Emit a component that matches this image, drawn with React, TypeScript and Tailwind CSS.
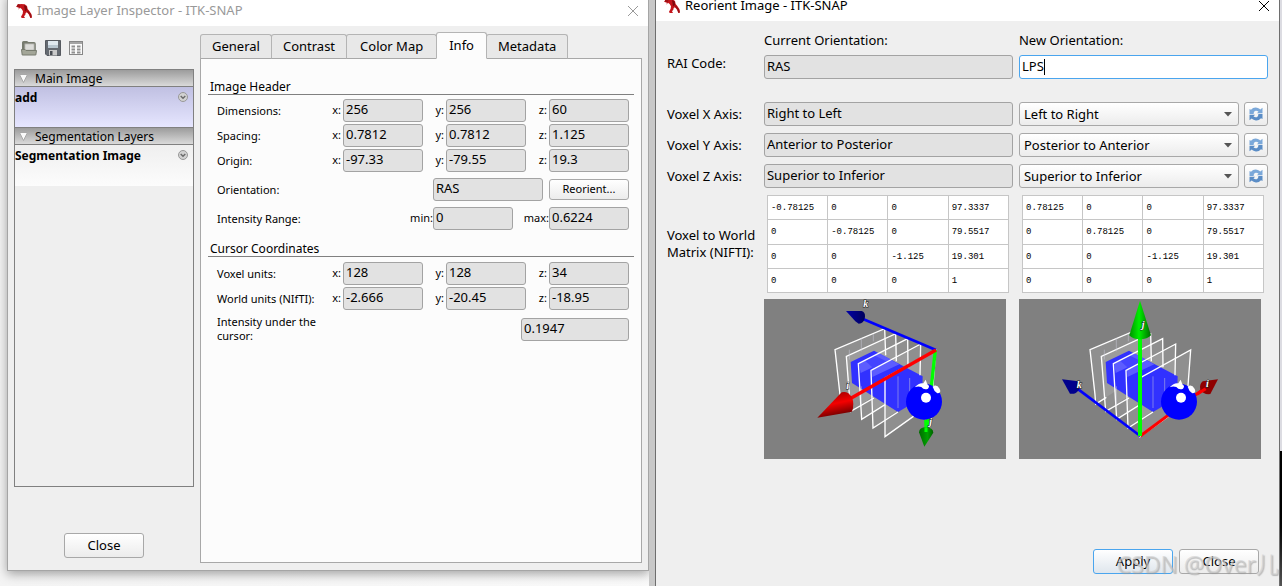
import type { ReactNode } from "react";
import clsx from "clsx";

const FIELD =
  "rounded-[3px] border border-[#a3a3a3] bg-[#e2e2e2] px-0.5 pb-[3px] text-[13px] text-black outline-none";
const BUTTON =
  "rounded-[3px] border border-[#a8a8a8] bg-linear-to-b from-white to-[#ececec] text-black";

const TABS = ["General", "Contrast", "Color Map", "Info", "Metadata"];

const DIRECTIONS = [
  "Left to Right",
  "Right to Left",
  "Posterior to Anterior",
  "Anterior to Posterior",
  "Superior to Inferior",
  "Inferior to Superior",
];

const AXES = [
  { axis: "X", current: "Right to Left", next: "Left to Right" },
  { axis: "Y", current: "Anterior to Posterior", next: "Posterior to Anterior" },
  { axis: "Z", current: "Superior to Inferior", next: "Superior to Inferior" },
];

const CURRENT_MATRIX = [
  ["-0.78125", "0", "0", "97.3337"],
  ["0", "-0.78125", "0", "79.5517"],
  ["0", "0", "-1.125", "19.301"],
  ["0", "0", "0", "1"],
];

const NEW_MATRIX = [
  ["0.78125", "0", "0", "97.3337"],
  ["0", "0.78125", "0", "79.5517"],
  ["0", "0", "-1.125", "19.301"],
  ["0", "0", "0", "1"],
];

function SnapIcon() {
  return (
    <svg width="16" height="16" viewBox="0 0 48 48" aria-hidden="true">
      <path
        d="M0 11 L5 5 L15 3 L26 4 L33 9 L35 18 L40 24 L46 33 L48 44 L43 45 L39 35 L33 28 L29 30 L28 35 L24 40 L27 45 L17 45 L15 41 L20 32 L21 25 L17 18 L12 14 L7 20 L9 14 Z"
        fill="#c4161c"
      />
      <circle cx="8" cy="8" r="5" fill="#a01015" />
      <path d="M24 6 L32 11 L33 21 L27 25 Z" fill="#7d0a0e" />
      <path d="M35 21 L46 35 L47 43 L43 44 L40 34 L33 27 Z" fill="#9a1014" />
    </svg>
  );
}

function CloseIcon() {
  return (
    <svg width="12" height="12" viewBox="0 0 12 12" aria-hidden="true">
      <path d="M1 1 L11 11 M11 1 L1 11" stroke="currentColor" fill="none" />
    </svg>
  );
}

function FolderIcon() {
  return (
    <svg width="16" height="16" viewBox="0 0 16 16" aria-hidden="true">
      <path d="M1 14 V2.500 Q1 1 2.500 1 H6 L7.500 2 H13 Q14.800 2 14.800 4 V14 Z" fill="#777b6e" />
      <rect x="4" y="4" width="9" height="6" fill="#e9e9e6" stroke="#b5b5b0" />
      <path d="M5 6 H12 M5 8 H12" stroke="#cfcfcb" />
      <path d="M0.500 9.500 H4 L5 10.500 H15.500 L14.800 15 H1.200 Z" fill="#a3a698" stroke="#777b6e" />
    </svg>
  );
}

function SaveIcon() {
  return (
    <svg width="16" height="16" viewBox="0 0 16 16" aria-hidden="true">
      <path d="M0.500 0.500 H15.500 V15.500 H2 L0.500 14 Z" fill="#656a71" stroke="#565a60" />
      <rect x="3" y="1" width="10" height="7" fill="#dfe8ef" />
      <rect x="3" y="5" width="10" height="3" fill="#b8c6d0" />
      <rect x="4" y="10" width="8" height="5.500" fill="#c9c9c9" />
      <rect x="5" y="11" width="2.500" height="4" fill="#484c52" />
    </svg>
  );
}

function TableIcon() {
  return (
    <svg width="14" height="14" viewBox="0 0 14 14" aria-hidden="true">
      <rect x="0.500" y="0.500" width="13" height="13" fill="#fbfbfb" stroke="#878787" />
      <path d="M1 2 H13" stroke="#a5a5a5" strokeWidth="2" />
      <path
        d="M2.500 5.500 H6 M8 5.500 H11.500 M2.500 8.500 H6 M8 8.500 H11.500 M2.500 11.500 H6 M8 11.500 H11.500"
        stroke="#909090"
        strokeWidth="2"
      />
    </svg>
  );
}

function MenuBadge() {
  return (
    <svg width="10" height="10" viewBox="0 0 10 10" aria-hidden="true">
      <circle cx="5" cy="5" r="4.500" fill="#d2d2d2" stroke="#989898" />
      <path d="M2.700 4 L5 6.300 L7.300 4" stroke="#6a6a6a" strokeWidth="1.400" fill="none" />
    </svg>
  );
}

function SwapIcon() {
  return (
    <svg width="14" height="14" viewBox="0 0 14 14" aria-hidden="true">
      <path d="M0.500 7 V2 L2 2.800 Q4.500 0 8 0.800 Q10.300 1.300 11.300 2.600 L13.500 0.800 V6.300 H8 L9.500 4.500 Q7.500 3.200 5.800 4 Q4.600 4.800 4.600 7 Z" fill="#7ba8d9" />
      <path d="M13.500 7 V12 L12 11.200 Q9.500 14 6 13.200 Q3.700 12.700 2.700 11.400 L0.500 13.200 V7.700 H6 L4.500 9.500 Q6.500 10.800 8.200 10 Q9.400 9.200 9.400 7 Z" fill="#5b8dc6" />
    </svg>
  );
}

function TitleBar({ title, muted }: { title: string; muted?: boolean }) {
  return (
    <header
      className={clsx(
        "flex h-[31px] shrink-0 items-center bg-white pr-[9px] pl-2",
        muted ? "text-[#999]" : "text-black",
      )}
    >
      <SnapIcon />
      <h1 className="ml-[5px] flex-1 text-[13px]">{title}</h1>
      <button type="button" aria-label="Close window">
        <CloseIcon />
      </button>
    </header>
  );
}

function LayerGroup({ title, layer, selected }: { title: string; layer: string; selected?: boolean }) {
  return (
    <>
      <h2 className="flex h-[17px] items-center gap-[7px] border-b border-[#808080] bg-linear-to-b from-[#9c9c9c] to-[#dadada] pt-px pl-1 text-[12px]">
        <svg width="9" height="9" viewBox="0 0 9 9" aria-hidden="true">
          <path d="M0.500 0.500 H8.500 L4.500 8.500 Z" fill="#fafafa" stroke="#a8a8a8" />
        </svg>
        {title}
      </h2>
      <div
        className={clsx(
          "flex h-[41px] items-start justify-between bg-linear-to-b pr-[5px]",
          selected
            ? "border-b border-[#808080] from-[#c0c0e2] to-[#e6e6ff]"
            : "from-[#efefef] to-[#fcfcfc]",
        )}
      >
        <span className="text-[12px] leading-[22px] font-bold">{layer}</span>
        <button type="button" className="mt-[5px]" aria-label={layer + " menu"}>
          <MenuBadge />
        </button>
      </div>
    </>
  );
}

function SectionTitle({ children }: { children: ReactNode }) {
  return (
    <h2 className="border-b border-[#808080] pl-0.5 text-[12px] leading-[15px]">{children}</h2>
  );
}

function Row({ label, children }: { label: string; children: ReactNode }) {
  return (
    <div className="flex items-center justify-between pr-[5px] pl-[9px] text-[11px]">
      <span className="w-[120px] leading-[14px]">{label}</span>
      <div className="flex">{children}</div>
    </div>
  );
}

function Field({ name, value }: { name: string; value: string }) {
  return (
    <label className="flex items-center">
      <span className="w-[23px] pr-0.5 text-right">{name}</span>
      <input readOnly defaultValue={value} className={clsx(FIELD, "h-[23px] w-20")} />
    </label>
  );
}

function Triple({ label, values }: { label: string; values: string[] }) {
  return (
    <Row label={label}>
      <Field name="x:" value={values[0]} />
      <Field name="y:" value={values[1]} />
      <Field name="z:" value={values[2]} />
    </Row>
  );
}

function InfoPanel() {
  return (
    <div className="flex-1 border border-[#a8a8a8] bg-[#fcfcfc] px-[7px] pt-5">
      <SectionTitle>Image Header</SectionTitle>
      <div className="mt-1 flex flex-col gap-0.5">
        <Triple label="Dimensions:" values={["256", "256", "60"]} />
        <Triple label="Spacing:" values={["0.7812", "0.7812", "1.125"]} />
        <Triple label="Origin:" values={["-97.33", "-79.55", "19.3"]} />
      </div>
      <div className="mt-1.5 flex flex-col gap-1.5">
        <Row label="Orientation:">
          <input
            readOnly
            aria-label="Orientation"
            defaultValue="RAS"
            className={clsx(FIELD, "mr-1.5 h-[23px] w-[110px]")}
          />
          <button type="button" className={clsx(BUTTON, "my-px w-20")}>
            Reorient...
          </button>
        </Row>
        <Row label="Intensity Range:">
          <label className="flex items-center">
            min:
            <input readOnly defaultValue="0" className={clsx(FIELD, "h-[23px] w-20")} />
          </label>
          <label className="flex items-center">
            <span className="w-9 text-right">max:</span>
            <input readOnly defaultValue="0.6224" className={clsx(FIELD, "h-[23px] w-20")} />
          </label>
        </Row>
      </div>
      <div className="mt-[11px]">
        <SectionTitle>Cursor Coordinates</SectionTitle>
      </div>
      <div className="mt-[5px] flex flex-col gap-0.5">
        <Triple label="Voxel units:" values={["128", "128", "34"]} />
        <Triple label="World units (NIfTI):" values={["-2.666", "-20.45", "-18.95"]} />
      </div>
      <div className="mt-[5px]">
        <Row label="Intensity under the cursor:">
          <input
            readOnly
            aria-label="Intensity under the cursor"
            defaultValue="0.1947"
            className={clsx(FIELD, "h-[23px] w-[108px]")}
          />
        </Row>
      </div>
    </div>
  );
}

function LayerInspector() {
  return (
    <section className="-mt-1.5 mb-[15px] flex min-w-0 flex-[642] flex-col border border-[#a5a5a5] bg-[#efefef] shadow-[0_3px_10px_rgba(0,0,0,0.35)]">
      <TitleBar title="Image Layer Inspector - ITK-SNAP" muted />
      <div className="grid flex-1 grid-cols-[180px_1fr] gap-1.5 px-1.5">
        <aside className="flex flex-col pb-3">
          <div className="flex h-[43px] items-center gap-2 pl-[7px]">
            <button type="button" aria-label="Open layer">
              <FolderIcon />
            </button>
            <button type="button" aria-label="Save layer">
              <SaveIcon />
            </button>
            <button type="button" aria-label="Layer table">
              <TableIcon />
            </button>
          </div>
          <div className="flex-1 border border-[#808080]">
            <LayerGroup title="Main Image" layer="add" selected />
            <LayerGroup title="Segmentation Layers" layer="Segmentation Image" />
          </div>
          <button type="button" className={clsx(BUTTON, "mt-[46px] h-[25px] w-20 self-center text-[13px]")}>
            Close
          </button>
        </aside>
        <div className="flex min-w-0 flex-col pt-1.5 pb-[7px]">
          <div role="tablist" className="relative -mb-px flex h-[27px] items-end">
            {TABS.map((tab) => (
              <button
                key={tab}
                type="button"
                role="tab"
                aria-selected={tab === "Info"}
                className={clsx(
                  "-mr-px rounded-t-[3px] border border-[#b4b4b4] text-[13px]",
                  tab === "Info"
                    ? "z-10 h-[27px] border-b-[#fcfcfc] bg-[#fcfcfc] px-3"
                    : "h-[25px] border-b-[#a8a8a8] bg-[#e8e8e8] px-[11px] pt-px",
                  tab === "Color Map" && "px-[13px]",
                )}
              >
                {tab}
              </button>
            ))}
          </div>
          <InfoPanel />
        </div>
      </div>
    </section>
  );
}

function Matrix({ rows, label }: { rows: string[][]; label: string }) {
  return (
    <table
      aria-label={label}
      className="ml-[3px] h-[98px] w-[242px] table-fixed border-collapse border border-[#b9b9b9] bg-white font-['Liberation_Mono',monospace] text-[9px]"
    >
      <tbody>
        {rows.map((row, r) => (
          <tr key={r}>
            {row.map((cell, c) => (
              <td key={c} className="border border-[#c6c6c6] px-[3px] pt-0.5 leading-none">
                {cell}
              </td>
            ))}
          </tr>
        ))}
      </tbody>
    </table>
  );
}

// The slices and the torso are the same in both scenes, only the axes move.
function Volume() {
  return (
    <>
      <g fill="#ffffff" fillOpacity="0.12">
        <path d="M213 155 L362 92 L370 227 L230 318 Z" />
        <path d="M247 175 L395 107 L402 245 L260 340 Z" />
        <path d="M283 197 L431 122 L434 265 L293 364 Z" />
        <path d="M321 217 L470 138 L466 290 L327 390 Z" />
        <path d="M363 240 L515 156 L503 316 L363 416 Z" />
      </g>
      <path d="M260 192 L330 158 L476 235 L474 300 L402 342 L264 255 Z" fill="#3131ff" />
      <path d="M285 196 L345 166 L378 183 L290 225 Z M324 212 L376 184 L406 199 L325 237 Z" fill="#5d5dff" />
      <path d="M300 185 L330 172 L372 192 L330 212 Z" fill="#4444ff" />
      <g stroke="#ffffff" strokeWidth="4" fill="none">
        <path d="M365 172 L362 92 L213 155 L228 290 L230 318 L262 298" />
        <path d="M397 190 L395 107 L247 175 L260 340 L330 300" />
        <path d="M432 208 L431 122 L283 197 L293 364 L363 320" />
        <path d="M468 232 L470 138 L321 217 L327 390 L402 342" />
        <path d="M503 316 L515 156 L363 240 L363 416 L503 316" />
      </g>
      <path
        d="M256 155 V185 M292 120 V160 M328 108 V130 M402 235 V330 M437 240 V300 M292 265 V320"
        stroke="#c8c8d8"
        strokeWidth="1.500"
      />
    </>
  );
}

function Head() {
  return (
    <g>
      <circle cx="480" cy="311" r="54" fill="#0000ff" />
      <path d="M452 268 Q466 253 478 256 L485 245 L490 259 Q499 264 492 272 Q480 277 472 267 Q462 264 452 268 Z" fill="#fff" />
      <path d="M506 266 Q518 257 527 273 Q533 285 520 286 Q510 280 506 266 Z" fill="#fff" />
      <circle cx="486" cy="299" r="15" fill="#fff" />
    </g>
  );
}

function AxisLabel({ x, y, children }: { x: number; y: number; children: string }) {
  return (
    <text
      x={x}
      y={y}
      fontSize="30"
      fill="#fff"
      stroke="#222"
      strokeWidth="3"
      paintOrder="stroke"
      className="font-['Liberation_Serif',serif] font-bold italic"
    >
      {children}
    </text>
  );
}

function CurrentScene() {
  return (
    <svg className="h-40 w-[242px] bg-[#808080]" viewBox="0 3 726 480" role="img" aria-label="Current orientation">
      <defs>
        <linearGradient id="redCone" x1="0" y1="0" x2="0.3" y2="1">
          <stop offset="0.2" stopColor="#b00000" />
          <stop offset="0.55" stopColor="#f40000" />
          <stop offset="1" stopColor="#700000" />
        </linearGradient>
        <linearGradient id="darkBlueCone">
          <stop offset="0" stopColor="#0000a8" />
          <stop offset="1" stopColor="#00005c" />
        </linearGradient>
        <linearGradient id="darkGreenCone">
          <stop offset="0" stopColor="#006c00" />
          <stop offset="0.6" stopColor="#00a000" />
          <stop offset="1" stopColor="#006000" />
        </linearGradient>
      </defs>
      <Volume />
      <path d="M514 156 L487 405" stroke="#00ff00" strokeWidth="10" />
      <Head />
      <path d="M290 60 L516 156" stroke="#0000ff" strokeWidth="8" />
      <path d="M516 156 L262 300" stroke="#ff0000" strokeWidth="10" />
      <path d="M246 39 L293 39 Q304 42 303 57 Q300 77 284 77 L274 70 Z" fill="url(#darkBlueCone)" />
      <path d="M160 359 L233 283 Q250 277 264 298 Q272 320 264 341 Z" fill="url(#redCone)" />
      <path d="M485 366 L486 404" stroke="#00ff00" strokeWidth="9" />
      <path d="M481 446 L465 403 Q466 388 486 388 Q507 389 508 404 Z" fill="url(#darkGreenCone)" />
      <path d="M486 388 V402" stroke="#00ff00" strokeWidth="9" />
      <AxisLabel x={298} y={26}>k</AxisLabel>
      <AxisLabel x={247} y={272}>i</AxisLabel>
      <AxisLabel x={496} y={382}>j</AxisLabel>
    </svg>
  );
}

function NewScene() {
  return (
    <svg className="h-40 w-[242px] bg-[#808080]" viewBox="0 3 726 480" role="img" aria-label="New orientation">
      <defs>
        <linearGradient id="greenCone">
          <stop offset="0" stopColor="#009000" />
          <stop offset="0.45" stopColor="#00ee00" />
          <stop offset="1" stopColor="#006a00" />
        </linearGradient>
      </defs>
      <Volume />
      <path d="M364 414 L560 268" stroke="#ff0000" strokeWidth="9" />
      <path d="M364 414 L170 268" stroke="#0000ff" strokeWidth="8" />
      <Head />
      <path d="M597 244 L551 250 Q540 260 544 276 Q555 291 574 288 Z" fill="#8f0000" />
      <path d="M534 289 L560 272" stroke="#ff0000" strokeWidth="9" />
      <path d="M129 244 L178 250 Q188 262 180 275 Q170 290 153 287 Z" fill="#00008c" />
      <path d="M363 414 V110" stroke="#00ff00" strokeWidth="12" />
      <path d="M363 8 L396 112 Q385 124 363 124 Q341 124 331 112 Z" fill="url(#greenCone)" />
      <AxisLabel x={173} y={270}>k</AxisLabel>
      <AxisLabel x={368} y={90}>j</AxisLabel>
      <AxisLabel x={561} y={266}>i</AxisLabel>
    </svg>
  );
}

function ReorientImage() {
  return (
    <section className="relative -mt-2.5 flex min-w-0 flex-[625] flex-col border-x border-[#6e6e6e] bg-[#efefef]">
      <TitleBar title="Reorient Image - ITK-SNAP" />
      <div className="grid grid-cols-[91px_1fr_1fr] gap-x-1.5 px-[11px] pt-[9px] text-[13px]">
        <span />
        <span className="leading-5">Current Orientation:</span>
        <label htmlFor="newCode" className="leading-5">
          New Orientation:
        </label>

        <label htmlFor="currentCode" className="mt-[3px] leading-5">
          RAI Code:
        </label>
        <input
          id="currentCode"
          readOnly
          defaultValue="RAS"
          className={clsx(FIELD, "mt-[5px] h-6 w-full")}
        />
        <div className="mt-[5px] flex h-6 items-center rounded-[3px] border border-[#4aa5ee] bg-white pl-0.5">
          <input
            id="newCode"
            defaultValue="LPS"
            size={3}
            className="field-sizing-content bg-transparent text-[13px] outline-none"
          />
          <span className="h-4 w-px bg-black" />
        </div>

        <div className="col-span-3 mt-[23px] flex flex-col gap-[7px]">
          {AXES.map(({ axis, current, next }) => (
            <div key={axis} className="grid grid-cols-[91px_1fr_1fr] items-center gap-x-1.5">
              <label htmlFor={"axis" + axis} className="pt-0.5">
                {"Voxel " + axis + " Axis:"}
              </label>
              <input
                readOnly
                aria-label={"Current voxel " + axis + " axis"}
                defaultValue={current}
                className={clsx(FIELD, "h-6 w-full")}
              />
              <div className="flex gap-[5px]">
                <div className="relative flex-1">
                  <select
                    id={"axis" + axis}
                    defaultValue={next}
                    className={clsx(BUTTON, "h-6 w-full appearance-none pt-px pl-1 text-[13px]")}
                  >
                    {DIRECTIONS.map((direction) => (
                      <option key={direction}>{direction}</option>
                    ))}
                  </select>
                  <svg
                    className="pointer-events-none absolute top-2.5 right-[7px]"
                    width="8"
                    height="5"
                    viewBox="0 0 8 5"
                    aria-hidden="true"
                  >
                    <path d="M0 0 H8 L4 4.500 Z" fill="#555" />
                  </svg>
                </div>
                <button
                  type="button"
                  aria-label={"Flip " + axis + " axis"}
                  className={clsx(BUTTON, "flex h-6 w-6 items-center justify-center")}
                >
                  <SwapIcon />
                </button>
              </div>
            </div>
          ))}
        </div>

        <span className="self-center pt-1.5 leading-[17px]">
          Voxel to World Matrix (NIFTI):
        </span>
        <div className="mt-[7px]">
          <Matrix rows={CURRENT_MATRIX} label="Current voxel to world matrix" />
        </div>
        <div className="mt-[7px]">
          <Matrix rows={NEW_MATRIX} label="New voxel to world matrix" />
        </div>

        <span />
        <div className="mt-1.5">
          <CurrentScene />
        </div>
        <div className="mt-1.5">
          <NewScene />
        </div>
      </div>
      <footer className="mt-auto flex justify-end gap-1.5 pr-5 pb-3 text-[13px]">
        <button
          type="button"
          className="h-[25px] w-20 rounded-[3px] border border-[#4aa5ee] bg-linear-to-b from-white to-[#dfe6ed]"
        >
          Apply
        </button>
        <button type="button" className={clsx(BUTTON, "h-[25px] w-20")}>
          Close
        </button>
      </footer>
      <span className="pointer-events-none absolute right-0 bottom-1.5 font-['Open_Sans','Noto_Sans_CJK_SC',sans-serif] text-[23px] leading-8 whitespace-nowrap text-[#cfcfcf]/60 [text-shadow:1px_1px_1px_#999999a0]">
        CSDN @Over儿
      </span>
    </section>
  );
}

export default function App() {
  return (
    <main className="flex min-h-screen overflow-hidden bg-linear-to-r from-[#f4f4f4] to-white pl-[7px] font-['Noto_Sans','Noto_Sans_CJK_SC',sans-serif] text-black">
      <LayerInspector />
      <div className="w-1.5 bg-[#c8c8c8]" />
      <ReorientImage />
      <div className="flex w-0.5 flex-col">
        <div className="flex-[451] bg-[#dcdce2]" />
        <div className="flex-[135] bg-linear-to-b from-black from-40% to-[#555]" />
      </div>
    </main>
  );
}
